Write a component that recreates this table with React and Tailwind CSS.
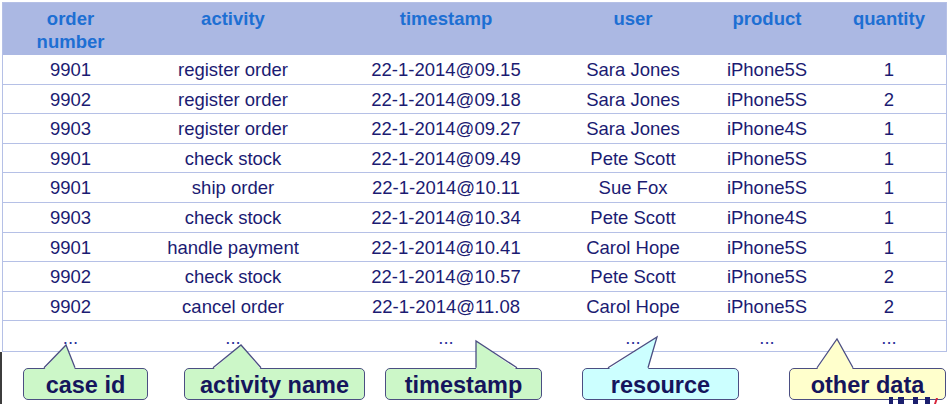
import React from 'react';

const rows = [
  ['9901', 'register order', '22-1-2014@09.15', 'Sara Jones', 'iPhone5S', '1'],
  ['9902', 'register order', '22-1-2014@09.18', 'Sara Jones', 'iPhone5S', '2'],
  ['9903', 'register order', '22-1-2014@09.27', 'Sara Jones', 'iPhone4S', '1'],
  ['9901', 'check stock', '22-1-2014@09.49', 'Pete Scott', 'iPhone5S', '1'],
  ['9901', 'ship order', '22-1-2014@10.11', 'Sue Fox', 'iPhone5S', '1'],
  ['9903', 'check stock', '22-1-2014@10.34', 'Pete Scott', 'iPhone4S', '1'],
  ['9901', 'handle payment', '22-1-2014@10.41', 'Carol Hope', 'iPhone5S', '1'],
  ['9902', 'check stock', '22-1-2014@10.57', 'Pete Scott', 'iPhone5S', '2'],
  ['9902', 'cancel order', '22-1-2014@11.08', 'Carol Hope', 'iPhone5S', '2'],
];

const cols = 'grid grid-cols-[135px_190px_236px_138px_130px_114px]';

// callout with a tail pointing up at the table
const Callout = ({ label, bg, fill, width, ml, tail }) => {
  const { l, r, tip, depth } = tail;
  return (
    <div
      className={`relative h-[32px] rounded-[5px] border-[1.5px] border-[#4b4e82] flex items-center justify-center pt-[4px] ${bg} ${width} ${ml}`}
    >
      <svg
        className="absolute left-[-1.5px] top-[-33.5px] overflow-visible"
        width="10"
        height="34"
      >
        <polygon points={`${l},34.5 ${tip},${32 - depth} ${r},34.5`} fill={fill} />
        <polyline
          points={`${l},32.75 ${tip},${32 - depth} ${r},32.75`}
          fill="none"
          stroke="#4b4e82"
          strokeWidth="1.3"
        />
      </svg>
      <span className="relative text-[23.5px] font-bold text-[#15155c] leading-none">{label}</span>
    </div>
  );
};

const App = () => {
  return (
    <div className="relative w-[950px] h-[404px] bg-white overflow-hidden font-['Liberation_Sans',Arial,sans-serif]">
      <div className="pt-[2px] pl-[2px]">
        <div className="w-[945px] border border-[#b5c0e6]">
          {/* header */}
          <div className={`${cols} h-[52px] bg-[#abb8e3] pt-[4px] text-center text-[18.5px] leading-[23px] font-bold text-[#1d6fd3]`}>
            <div>order<br />number</div>
            <div>activity</div>
            <div>timestamp</div>
            <div>user</div>
            <div>product</div>
            <div>quantity</div>
          </div>

          {/* rows */}
          {rows.map((row, i) => (
            <div key={i} className={`${cols} h-[29.6px] border-b border-[#b5c0e6] items-center pt-[1px] text-center text-[18.5px] text-[#1b1b72]`}>
              {row.map((cell, j) => (
                <div key={j}>{cell}</div>
              ))}
            </div>
          ))}
          <div className={`${cols} h-[29.6px] items-center pt-[3px] text-center text-[18.5px] text-[#2b2f9a]`}>
            {[0, 1, 2, 3, 4, 5].map((j) => (
              <div key={j}>...</div>
            ))}
          </div>
        </div>
      </div>

      {/* callouts */}
      <div className="flex h-[52px]">
        <div className="w-[2px] h-full bg-[#3c3c3c]" />
        <div className="flex pt-[16px]">
          <Callout label="case id" bg="bg-[#ccf7c8]" fill="#ccf7c8" width="w-[125px]" ml="ml-[21px]" tail={{ l: 21, r: 52, tip: 43, depth: 22 }} />
          <Callout label="activity name" bg="bg-[#ccf7c8]" fill="#ccf7c8" width="w-[181px]" ml="ml-[36px]" tail={{ l: 29, r: 77, tip: 57, depth: 22 }} />
          <Callout label="timestamp" bg="bg-[#ccf7c8]" fill="#ccf7c8" width="w-[157px]" ml="ml-[20px]" tail={{ l: 91, r: 132, tip: 91, depth: 26 }} />
          <Callout label="resource" bg="bg-[#ccffff]" fill="#ccffff" width="w-[157px]" ml="ml-[40px]" tail={{ l: 26, r: 66, tip: 75, depth: 30 }} />
          <Callout label="other data" bg="bg-[#ffffcc]" fill="#ffffcc" width="w-[157px]" ml="ml-[50px]" tail={{ l: 28, r: 64, tip: 48, depth: 28 }} />
        </div>
      </div>

      {/* cropped logo, bottom right */}
      <svg className="absolute left-[886px] top-[396px]" width="56" height="8" viewBox="0 0 56 8">
        <rect x="3" y="1" width="4" height="7" fill="#1b1f6e" />
        <rect x="12" y="1" width="6" height="7" fill="#1b1f6e" />
        <rect x="27" y="1" width="5" height="7" fill="#1b1f6e" />
        <rect x="39" y="1" width="5" height="7" fill="#1b1f6e" />
        <polygon points="48,8 50,2 52,2 50,8" fill="#d8243a" />
      </svg>
    </div>
  );
};

export default App;
